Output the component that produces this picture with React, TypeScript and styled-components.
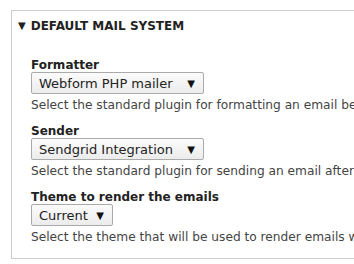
import styled, { createGlobalStyle } from "styled-components";

const GlobalStyle = createGlobalStyle`
    html, body {
        margin: 0;
        padding: 0;
        background: #ffffff;
    }
    body {
        width: 354px;
        height: 264px;
        overflow: hidden;
        font-family: "DejaVu Sans", "Liberation Sans", sans-serif;
        color: #333333;
    }
`

const Page = styled.div`
    padding: 10px 0 0 11px;
    width: 343px;
    overflow: hidden;
`

const Fieldset = styled.div`
    width: 400px;
    height: 249px;
    border: 1px solid #cccccc;
    box-sizing: border-box;
`

const Legend = styled.div`
    display: flex;
    align-items: center;
    gap: 5px;
    padding: 7px 0 0 6px;
    font-size: 12px;
    font-weight: bold;
    color: #222222;
    height: 16px;
    line-height: 16px;
`

const Arrow = styled.span`
    font-size: 10px;
    color: #222222;
`

const Body = styled.div`
    display: flex;
    flex-direction: column;
    gap: 13px;
    padding: 25px 0 0 19px;
`

const Item = styled.div`
    display: flex;
    flex-direction: column;
    align-items: flex-start;
`

const Label = styled.div`
    font-size: 12px;
    font-weight: bold;
    color: #222222;
    height: 13px;
    line-height: 13px;
`

const Select = styled.div<{ width: number }>`
    display: flex;
    align-items: center;
    justify-content: space-between;
    box-sizing: border-box;
    width: ${props => props.width}px;
    height: 22px;
    padding: 0 8px 0 7px;
    border: 1px solid #aaaaaa;
    border-radius: 2px;
    background: linear-gradient(#fbfbfb, #ececec);
    font-size: 13px;
    color: #222222;
    white-space: nowrap;
`

const Caret = styled.span`
    font-size: 10px;
    color: #111111;
`

const Description = styled.div`
    margin-top: 4px;
    font-size: 12.2px;
    color: #444444;
    white-space: nowrap;
    height: 14px;
    line-height: 14px;
`

const items = [
    {label: "Formatter", value: "Webform PHP mailer", width: 173,
        text: "Select the standard plugin for formatting an email before sending it."},
    {label: "Sender", value: "Sendgrid Integration", width: 173,
        text: "Select the standard plugin for sending an email after formatting it."},
    {label: "Theme to render the emails", value: "Current", width: 82,
        text: "Select the theme that will be used to render emails which are configured for this."},
]

export default function App() {
    return (
        <Page>
            <GlobalStyle/>
            <Fieldset>
                <Legend>
                    <Arrow>▼</Arrow>
                    DEFAULT MAIL SYSTEM
                </Legend>
                <Body>
                    {items.map(item => (
                        <Item key={item.label}>
                            <Label>{item.label}</Label>
                            <Select width={item.width}>
                                {item.value}
                                <Caret>▼</Caret>
                            </Select>
                            <Description>{item.text}</Description>
                        </Item>
                    ))}
                </Body>
            </Fieldset>
        </Page>
    );
}
